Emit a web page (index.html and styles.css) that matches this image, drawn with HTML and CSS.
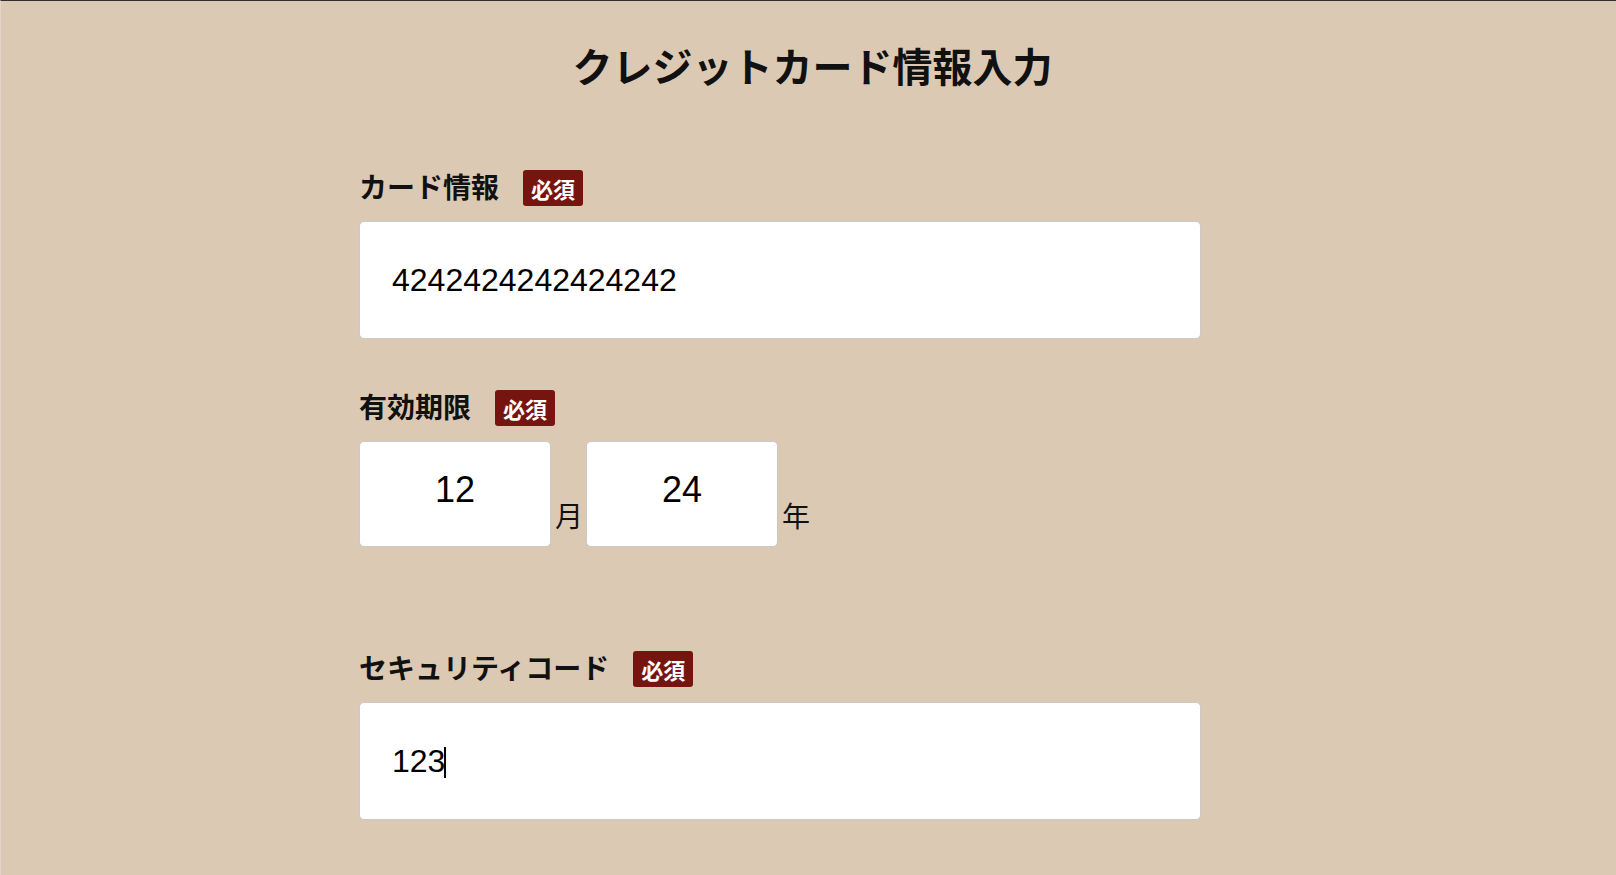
FILE: index.html
```html
<!DOCTYPE html>
<html lang="ja">
<head>
<meta charset="utf-8">
<title>クレジットカード情報入力</title>
<link rel="stylesheet" href="styles.css">
</head>
<body>
<div class="page">
  <h1 class="title">クレジットカード情報入力</h1>
  <form class="form">
    <div class="field">
      <div class="field-head"><span class="label">カード情報</span><span class="badge">必須</span></div>
      <input class="text-input" type="text" value="4242424242424242">
    </div>
    <div class="field field-expiry">
      <div class="field-head"><span class="label">有効期限</span><span class="badge">必須</span></div>
      <div class="expiry-row">
        <input class="date-input" type="text" value="12"><span class="unit">月</span><input class="date-input" type="text" value="24"><span class="unit">年</span>
      </div>
    </div>
    <div class="field">
      <div class="field-head"><span class="label">セキュリティコード</span><span class="badge">必須</span></div>
      <div class="input-wrap">
        <input class="text-input" type="text" value="123">
        <span class="caret"></span>
      </div>
    </div>
  </form>
</div>
</body>
</html>
```
FILE: styles.css
```css
html, body {
  margin: 0;
  height: 100%;
}
body {
  background: #dcc9b4;
  border-top: 1px solid #2e2e2e;
  border-left: 1px solid #e4d6c7;
  box-sizing: border-box;
  font-family: "Noto Sans CJK JP", "Noto Sans", sans-serif;
  color: #111;
}
.page {
  display: flex;
  flex-direction: column;
}
.title {
  margin: 36px 0 0;
  padding-left: 8px;
  text-align: center;
  font-size: 40px;
  line-height: 56px;
  font-weight: 700;
  color: #111;
}
.form {
  width: 842px;
  margin: 77px 0 0 358px;
  display: flex;
  flex-direction: column;
  gap: 51px;
}
.field-head {
  display: flex;
  align-items: center;
  gap: 24px;
  height: 36px;
  margin-bottom: 15px;
}
.label {
  font-size: 28px;
  font-weight: 700;
  line-height: 36px;
  padding-bottom: 4px;
}
.badge {
  background: #76150f;
  color: #fff;
  font-size: 22px;
  font-weight: 700;
  line-height: 36px;
  height: 36px;
  padding: 0 8px;
  border-radius: 3px;
}
.input-wrap {
  position: relative;
}
.text-input {
  display: block;
  width: 842px;
  height: 118px;
  box-sizing: border-box;
  border: 1px solid #c9c9c9;
  border-radius: 5px;
  background: #fff;
  padding: 0 32px;
  font-family: "Liberation Sans", Arial, sans-serif;
  font-size: 32px;
  color: #000;
  outline: none;
}
.caret {
  position: absolute;
  left: 85px;
  top: 45px;
  width: 2px;
  height: 31px;
  background: #000;
}
.expiry-row {
  display: flex;
  align-items: flex-end;
  margin-bottom: 53px;
}
.date-input {
  width: 192px;
  height: 106px;
  box-sizing: border-box;
  border: 1px solid #c9c9c9;
  border-radius: 5px;
  background: #fff;
  padding: 0 0 8px;
  text-align: center;
  font-family: "Liberation Sans", Arial, sans-serif;
  font-size: 36px;
  color: #000;
  outline: none;
}
.unit {
  font-size: 28px;
  line-height: 28px;
  margin: 0 3px 18px 4px;
  color: #111;
}
```
